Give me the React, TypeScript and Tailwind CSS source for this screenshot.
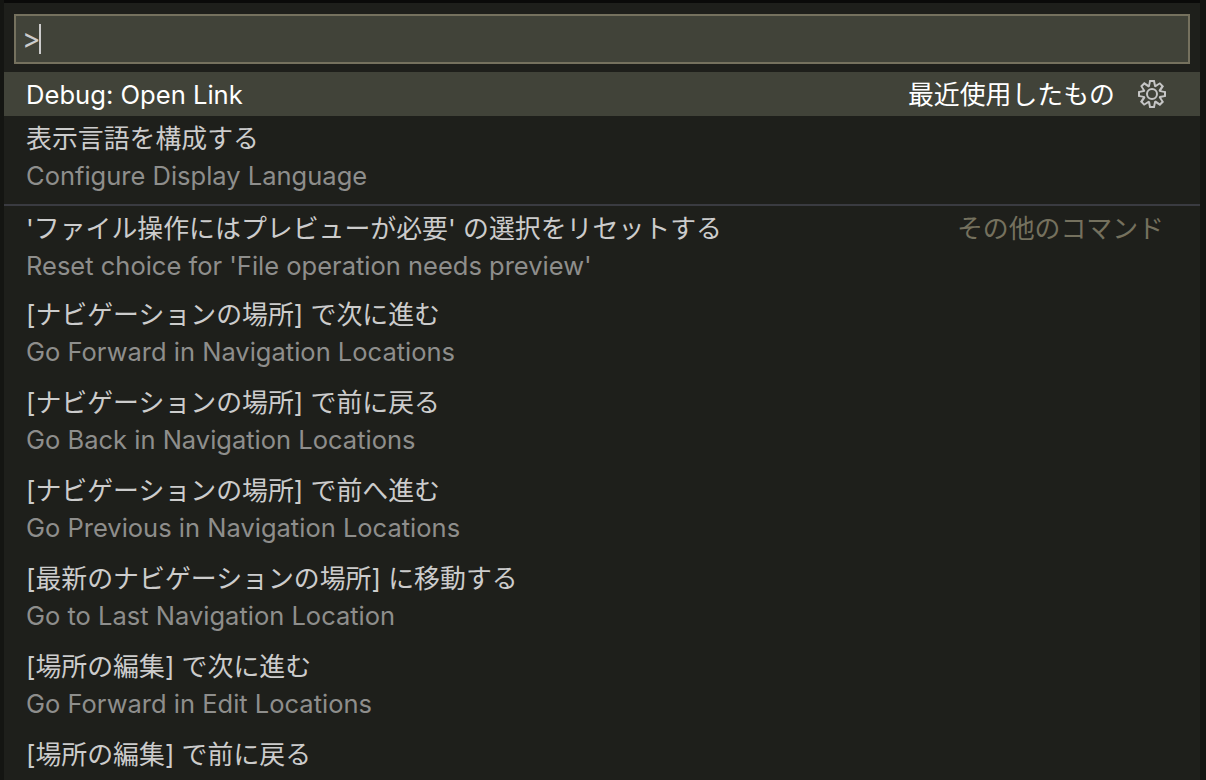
const sans = "font-['Inter','Noto_Sans_CJK_JP',sans-serif]"

const rows = [
  { title: "表示言語を構成する", sub: "Configure Display Language" },
  { title: "'ファイル操作にはプレビューが必要' の選択をリセットする", sub: "Reset choice for 'File operation needs preview'", group: "その他のコマンド" },
  { title: "[ナビゲーションの場所] で次に進む", sub: "Go Forward in Navigation Locations" },
  { title: "[ナビゲーションの場所] で前に戻る", sub: "Go Back in Navigation Locations" },
  { title: "[ナビゲーションの場所] で前へ進む", sub: "Go Previous in Navigation Locations" },
  { title: "[最新のナビゲーションの場所] に移動する", sub: "Go to Last Navigation Location" },
  { title: "[場所の編集] で次に進む", sub: "Go Forward in Edit Locations" },
  { title: "[場所の編集] で前に戻る", sub: "" },
]

function GearIcon() {
  return (
    <svg width="32" height="32" viewBox="0 0 16 16" fill="#c5c5c5">
      <path
        fillRule="evenodd"
        clipRule="evenodd"
        d="M9.1 4.4L8.6 2H7.4l-.5 2.4-.7.3-2-1.3-.9.8 1.3 2-.2.7-2.4.5v1.2l2.4.5.3.8-1.3 2 .8.8 2-1.3.8.3.4 2.3h1.2l.5-2.4.8-.3 2 1.3.8-.8-1.3-2 .3-.8 2.3-.4V7.4l-2.4-.5-.3-.8 1.3-2-.8-.8-2 1.3-.7-.2zM9.4 1l.5 2.4L12 2.1l2 2-1.4 2.1 2.4.4v2.8l-2.4.5L14 12l-2 2-2.1-1.4-.5 2.4H6.6l-.5-2.4L4 13.9l-2-2 1.4-2.1L1 9.4V6.6l2.4-.5L2.1 4l2-2 2.1 1.4.4-2.4h2.8zM8 10a2 2 0 1 0 0-4 2 2 0 0 0 0 4zm0 1a3 3 0 1 0 0-6 3 3 0 0 0 0 6z"
      />
    </svg>
  )
}

export default function App() {
  return (
    <div className={`${sans} h-[780px] w-[1206px] overflow-hidden bg-[#141512] text-[25.9px]`}>
      <div className="ml-1 mr-[6px] h-[780px] overflow-hidden border-t-[3px] border-[#0a0a09] bg-[#1e1f1b]">
        <div className="px-[10px] pb-2 pt-[11px]">
          <div className="flex h-[50px] items-center border-2 border-[#75715e] bg-[#414339] pl-[6px]">
            <span className="text-[28px] leading-none text-[#cccccc]">&gt;</span>
            <span className="-ml-[2px] h-[30px] w-[2px] bg-[#cccccc]" />
          </div>
        </div>

        {/* Selected command */}
        <div className="flex h-[44px] items-center justify-between bg-[#414339] pl-[22px] pr-[32px] text-white">
          <span className="translate-y-px text-[25.6px]">Debug: Open Link</span>
          <div className="flex items-center gap-[21px]">
            <span className="translate-y-px">最近使用したもの</span>
            <GearIcon />
          </div>
        </div>

        {rows.map((row, i) => (
          <div
            key={i}
            className={`relative h-[88px] pl-[22px] pr-[36px] ${row.group ? "border-t-2 border-[#3a3b41]" : ""}`}
          >
            <div className="flex h-[38px] translate-y-[4px] items-center justify-between text-[#cccccc]">
              <span>{row.title}</span>
              {row.group && <span className="text-[#75715e]">{row.group}</span>}
            </div>
            <div className="flex h-[38px] translate-y-[3px] items-center text-[25.5px] text-[#8e8e8c]">{row.sub}</div>
          </div>
        ))}
      </div>
    </div>
  )
}
